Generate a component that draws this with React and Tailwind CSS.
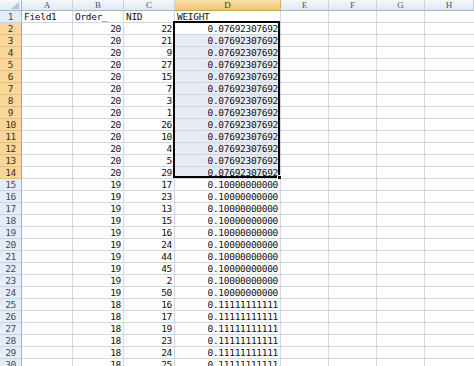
import React from "react";

const cols = ["A", "B", "C", "D", "E", "F", "G", "H"];

const W1 = "0.07692307692";
const W2 = "0.10000000000";
const W3 = "0.11111111111";

const data = [
  ["Field1", "Order_", "NID", "WEIGHT"],
  ...[22, 21, 9, 27, 15, 7, 3, 1, 26, 10, 4, 5, 29].map((n) => ["", "20", String(n), W1]),
  ...[17, 23, 13, 15, 16, 24, 44, 45, 2, 50].map((n) => ["", "19", String(n), W2]),
  ...[16, 17, 19, 23, 24, 25].map((n) => ["", "18", String(n), W3]),
];

const grid = "grid grid-cols-[22px_51px_51px_51px_106px_48px_48px_48px_1fr]";

function ColHeader({ label, selected }) {
  return (
    <div
      className={
        "flex items-center justify-center h-[11px] border-r border-b text-[9px] leading-none font-['Liberation_Serif',serif] " +
        (selected
          ? "bg-gradient-to-b from-[#fae0ae] to-[#f2c46c] border-r-[#d8b070] border-b-[#c9a058] text-[#3d3320]"
          : "bg-gradient-to-b from-[#f5f8fb] to-[#e1e8f1] border-r-[#c6d2df] border-b-[#9eb6ce] text-[#4a5a6e]")
      }
    >
      {label}
    </div>
  );
}

function RowHeader({ n, selected }) {
  return (
    <div
      className={
        "flex items-end justify-center h-[12px] border-r border-b text-[9.5px] leading-[11px] tracking-[-0.4px] " +
        (selected
          ? "bg-[#f9d69a] border-r-[#c9a058] border-b-[#e8c07c] text-[#3d3320]"
          : "bg-[#e4ecf7] border-r-[#9eb6ce] border-b-[#c6d4e6] text-[#3f4e60]")
      }
    >
      {n}
    </div>
  );
}

function Cell({ children, right, fill, className = "" }) {
  return (
    <div
      className={
        "h-[12px] border-r border-b border-[#d0d7e5] text-[9.5px] leading-[11px] tracking-[-0.3px] text-[#111] whitespace-nowrap overflow-visible flex items-end px-[2px] " +
        (right ? "justify-end " : "justify-start ") +
        (fill ? "bg-[#e8ebf6] " : "bg-white ") +
        className
      }
    >
      {children}
    </div>
  );
}

export default function App() {
  return (
    <div className="w-[474px] h-[366px] overflow-hidden bg-white font-['DejaVu_Sans_Mono',monospace]">
      <div className={grid}>
        <div className="relative h-[11px] border-r border-b border-r-[#9eb6ce] border-b-[#9eb6ce] bg-gradient-to-b from-[#f5f8fb] to-[#e1e8f1]">
          <svg className="absolute right-[2px] bottom-[1px]" width="8" height="7" viewBox="0 0 8 7">
            <polygon points="8,0 8,7 0,7" fill="#b4c3d6" />
          </svg>
        </div>
        {cols.map((c) => (
          <ColHeader key={c} label={c} selected={c === "D"} />
        ))}
        {data.map((row, i) => {
          const rn = i + 1;
          const sel = rn >= 2 && rn <= 14;
          return (
            <React.Fragment key={rn}>
              <RowHeader n={rn} selected={sel} />
              <Cell>{row[0]}</Cell>
              <Cell right={rn > 1}>{row[1]}</Cell>
              <Cell right={rn > 1}>{row[2]}</Cell>
              <Cell right={rn > 1} fill={rn >= 3 && rn <= 14} className={rn === 2 ? "relative" : ""}>
                {rn === 2 && (
                  <div className="absolute left-[-2px] top-[-2px] w-[107px] h-[157px] border-2 border-black pointer-events-none z-10">
                    <div className="absolute right-[-4px] bottom-[-4px] w-[5px] h-[5px] bg-black border border-white" />
                  </div>
                )}
                <span className="relative z-20">{row[3]}</span>
              </Cell>
              <Cell />
              <Cell />
              <Cell />
              <Cell className="border-r-0" />
            </React.Fragment>
          );
        })}
      </div>
    </div>
  );
}
